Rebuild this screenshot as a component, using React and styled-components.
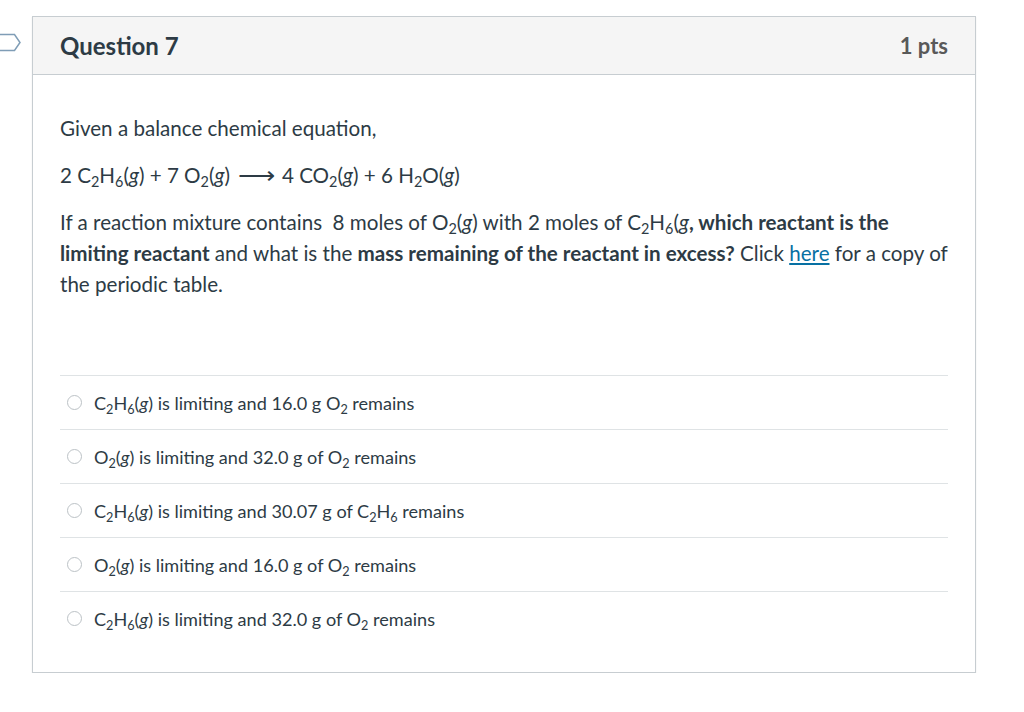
import React from 'react';
import styled, { createGlobalStyle } from 'styled-components';

const TEXT = '#2d3b45';
const BORDER = '#c7cdd1';

const GlobalStyle = createGlobalStyle`
  body {
    margin: 0;
    background: #fff;
    font-family: Lato, "Open Sans", sans-serif;
    color: ${TEXT};
  }
`;

const Page = styled.div`
  display: flex;
  align-items: flex-start;
  padding-top: 16px;
`;

const BookmarkSlot = styled.div`
  width: 32px;
  flex: 0 0 32px;
  padding-top: 17px;
  display: flex;
`;

const Card = styled.div`
  width: 942px;
  border: 1px solid ${BORDER};
  box-shadow: 0 1px 1px rgba(0, 0, 0, 0.12);
  background: #fff;
  height: 655px;
  box-sizing: content-box;
`;

const Header = styled.div`
  display: flex;
  justify-content: space-between;
  align-items: center;
  height: 57px;
  padding: 0 27px 0 27px;
  background: #f5f5f5;
  border-bottom: 1px solid ${BORDER};
`;

const Title = styled.h2`
  margin: 0;
  font-size: 24px;
  font-weight: 700;
  color: ${TEXT};
`;

const Points = styled.span`
  font-size: 22px;
  font-weight: 700;
  color: #595959;
`;

const Body = styled.div`
  padding: 38px 27px 0 27px;
`;

const Para = styled.p`
  margin: 0 0 16px;
  font-size: 20.6px;
  line-height: 31px;
`;

const Strong = styled.strong`
  font-weight: 700;
`;

const Link = styled.a`
  color: #0770a3;
  text-decoration: underline;
`;

const Sub = styled.sub`
  font-size: 70%;
  line-height: 0;
  vertical-align: -0.3em;
`;

const Arrow = styled.span`
  display: inline-block;
  margin: 0 7px 0 8px;
  font-size: 26px;
  line-height: 0;
  vertical-align: -1px;
`;

const Answers = styled.div`
  margin-top: 75px;
`;

const AnswerRow = styled.label`
  display: flex;
  align-items: center;
  gap: 12px;
  height: 53px;
  border-top: 1px solid #dfe3e5;
  padding-left: 7px;
  font-size: 18.1px;
  color: ${TEXT};
`;

const Radio = styled.span`
  width: 15px;
  height: 15px;
  border-radius: 50%;
  border: 1px solid #bcc2c6;
  background: #fff;
  box-sizing: border-box;
  flex: 0 0 15px;
`;

const Bookmark = () => (
  <svg width="22" height="20" viewBox="0 0 22 20">
    <path
      d="M0 1.5 H14.5 L20 9.5 L14.5 17.5 H0"
      fill="none"
      stroke="#7f9db6"
      strokeWidth="1.5"
    />
  </svg>
);

const C2H6 = () => (
  <>
    C<Sub>2</Sub>H<Sub>6</Sub>
  </>
);

const O2 = () => (
  <>
    O<Sub>2</Sub>
  </>
);

const G = () => <i>g</i>;

const answers = [
  <>
    <C2H6 />(<G />) is limiting and 16.0 g <O2 /> remains
  </>,
  <>
    <O2 />(<G />) is limiting and 32.0 g of <O2 /> remains
  </>,
  <>
    <C2H6 />(<G />) is limiting and 30.07 g of <C2H6 /> remains
  </>,
  <>
    <O2 />(<G />) is limiting and 16.0 g of <O2 /> remains
  </>,
  <>
    <C2H6 />(<G />) is limiting and 32.0 g of <O2 /> remains
  </>,
];

export default function App() {
  return (
    <>
      <GlobalStyle />
      <Page>
        <BookmarkSlot>
          <Bookmark />
        </BookmarkSlot>
        <Card>
          <Header>
            <Title>Question 7</Title>
            <Points>1 pts</Points>
          </Header>
          <Body>
            <Para>Given a balance chemical equation,</Para>
            <Para>
              2 <C2H6 />(<G />) + 7 <O2 />(<G />)
              <Arrow>⟶</Arrow>4 CO<Sub>2</Sub>(<G />) + 6 H<Sub>2</Sub>O(<G />)
            </Para>
            <Para>
              If a reaction mixture contains&nbsp; 8 moles of <O2 />(<G />) with 2 moles of{' '}
              <C2H6 />(<G />
              <Strong>, which reactant is the limiting reactant</Strong> and what is the{' '}
              <Strong>mass remaining of the reactant in excess?</Strong> Click{' '}
              <Link href="#">here</Link> for a copy of the periodic table.
            </Para>
            <Answers>
              {answers.map((a, i) => (
                <AnswerRow key={i}>
                  <Radio />
                  <span>{a}</span>
                </AnswerRow>
              ))}
            </Answers>
          </Body>
        </Card>
      </Page>
    </>
  );
}
